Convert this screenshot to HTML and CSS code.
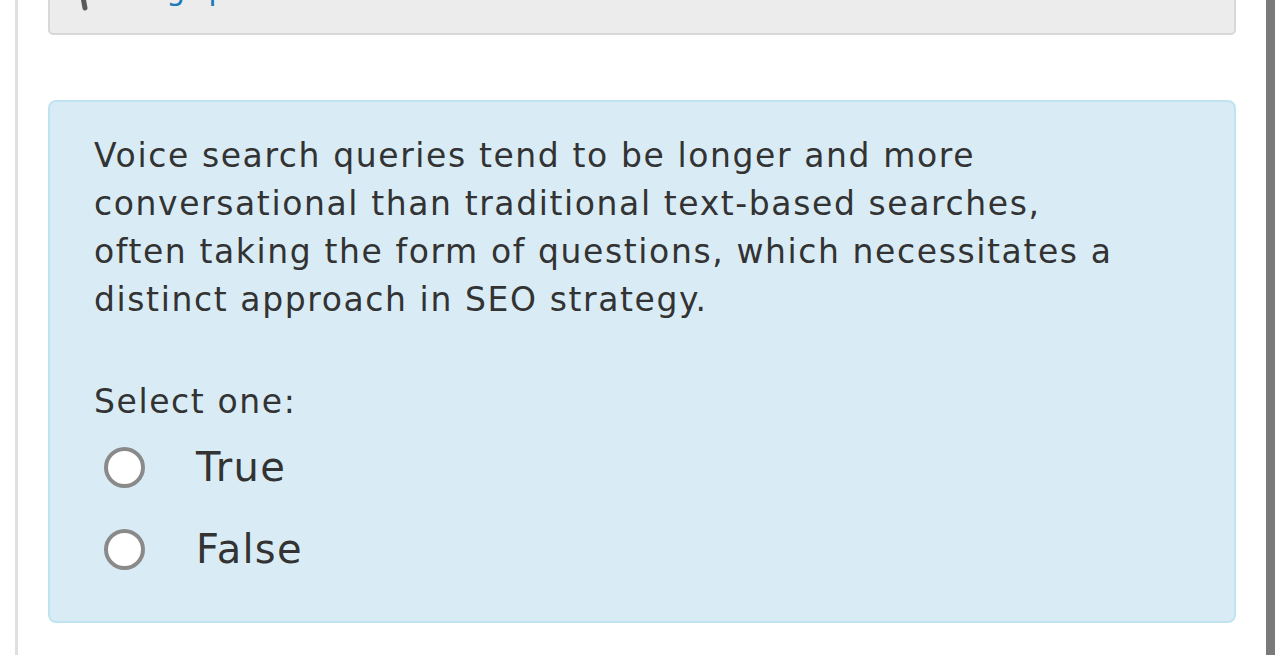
FILE: index.html
```html
<!DOCTYPE html>
<html lang="en">

<head>
    <meta charset="UTF-8">
    <meta name="viewport" content="width=device-width, initial-scale=1.0">
    <title>Question</title>
    <link rel="stylesheet" href="styles.css">
</head>

<body>
    <div class="page">
        <div class="content">
            <div class="info">
                <a class="flag-link" href="#">
                    <svg class="flag-icon" width="30" height="44" viewBox="0 0 30 44">
                        <path d="M10 2 L17 40" stroke="#5a5a5a" stroke-width="5" stroke-linecap="round" />
                        <path d="M10 4 L28 2 L26 14 L13 16 Z" fill="#5a5a5a" />
                    </svg>
                    <span>Flag question</span>
                </a>
            </div>

            <div class="formulation">
                <p class="qtext">Voice search queries tend to be longer and more conversational than traditional text-based searches, often taking the form of questions, which necessitates a distinct approach in SEO strategy.</p>

                <div class="prompt">Select one:</div>
                <div class="answer">
                    <label class="option">
                        <span class="radio"></span>
                        <span class="option-label">True</span>
                    </label>
                    <label class="option">
                        <span class="radio"></span>
                        <span class="option-label">False</span>
                    </label>
                </div>
            </div>
        </div>
        <div class="scrollbar"></div>
        <div class="edge"></div>
    </div>
</body>

</html>
```

FILE: styles.css
```css
body {
    font-family: 'DejaVu Sans', Verdana, sans-serif;
    margin: 0;
    padding: 0;
    background-color: #ffffff;
    color: #333;
    overflow: hidden;
}

.page {
    display: flex;
    height: 655px;
}

.content {
    flex: 1;
    margin-left: 15px;
    border-left: 3px solid #e0e0e0;
    padding: 0 30px 0 30px;
}

.info {
    margin-top: -52px;
    height: 83px;
    background-color: #ececec;
    border: 2px solid #d8d8d8;
    border-radius: 5px;
    padding: 0 0 0 18px;
    display: flex;
    align-items: center;
}

.flag-link {
    display: flex;
    align-items: center;
    gap: 20px;
    color: #1a7ab8;
    text-decoration: none;
    font-size: 30px;
    letter-spacing: 1.4px;
    margin-top: -4px;
}

.flag-icon {
    display: block;
}

.formulation {
    margin-top: 65px;
    background-color: #d9ecf5;
    border: 2px solid #c0e4ef;
    border-radius: 8px;
    padding: 30px 44px 31px 44px;
}

.qtext {
    margin: 0;
    max-width: 1030px;
    font-size: 33px;
    line-height: 48px;
    letter-spacing: 1.6px;
}

.prompt {
    margin-top: 54px;
    font-size: 33px;
    line-height: 48px;
    letter-spacing: 1.6px;
}

.option {
    display: flex;
    align-items: center;
    height: 82px;
}

.radio {
    width: 33px;
    height: 33px;
    margin-left: 10px;
    border: 4px solid #8a8a8a;
    border-radius: 50%;
    background-color: #ffffff;
}

.option-label {
    margin-left: 51px;
    font-size: 40px;
    letter-spacing: 1.3px;
}

.scrollbar {
    width: 9px;
    background-color: #7a7a7a;
}

.edge {
    width: 9px;
}
```
